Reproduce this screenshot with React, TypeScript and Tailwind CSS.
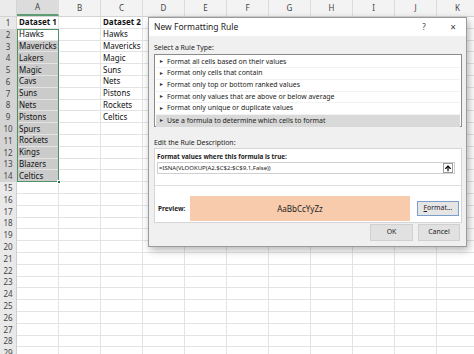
import { ArrowUp } from 'lucide-react'

const cols = ['A', 'B', 'C', 'D', 'E', 'F', 'G', 'H', 'I', 'J', 'K']

const colA = ['Dataset 1', 'Hawks', 'Mavericks', 'Lakers', 'Magic', 'Cavs', 'Suns', 'Nets', 'Pistons', 'Spurs', 'Rockets', 'Kings', 'Blazers', 'Celtics']
const colC = ['Dataset 2', 'Hawks', 'Mavericks', 'Magic', 'Suns', 'Nets', 'Pistons', 'Rockets', 'Celtics']

const ruleTypes = [
  'Format all cells based on their values',
  'Format only cells that contain',
  'Format only top or bottom ranked values',
  'Format only values that are above or below average',
  'Format only unique or duplicate values',
  'Use a formula to determine which cells to format',
]

const rows = Array.from({ length: 29 }, (_, i) => i + 1)

function Sheet() {
  return (
    <div className="flex flex-col">
      {/* column headers */}
      <div className="flex h-[17px] bg-[#f3f3f3] border-b border-[#d4d4d4]">
        <div className="w-[17px] shrink-0 bg-[#ebebeb] border-r border-[#d4d4d4]" />
        {cols.map(c => (
          <div
            key={c}
            className={`w-[42px] shrink-0 flex items-center justify-center text-[8px] text-[#444] border-r border-[#dcdcdc] ${
              c === 'A' ? 'bg-[#dcdcdc] border-b-2 border-b-[#5e9c76]' : ''
            }`}
          >
            {c}
          </div>
        ))}
      </div>
      {rows.map(r => {
        const sel = r >= 2 && r <= 14
        return (
          <div key={r} className="flex h-[11.8px]">
            <div
              className={`w-[17px] shrink-0 flex items-center justify-center text-[8px] text-[#444] border-r border-[#cfcfcf] ${
                sel ? 'bg-[#d4d4d4]' : 'bg-[#e9e9e9]'
              }`}
            >
              {r}
            </div>
            {cols.map(c => {
              let text = ''
              if (c === 'A') text = colA[r - 1] ?? ''
              if (c === 'C') text = colC[r - 1] ?? ''
              const fill = c === 'A' && r >= 3 && r <= 14
              return (
                <div
                  key={c}
                  className={`w-[42px] shrink-0 flex items-center px-[2px] text-[8px] leading-none text-[#111] whitespace-nowrap border-r border-b border-[#e3e3e3] ${
                    fill ? 'bg-[#cbcbcb]' : ''
                  } ${r === 1 ? 'font-bold' : ''}`}
                >
                  {text}
                </div>
              )
            })}
          </div>
        )
      })}
    </div>
  )
}

function Dialog() {
  return (
    <div className="absolute left-[148px] top-[17px] w-[319px] flex flex-col border border-[#9a9a9a] shadow-[2px_3px_8px_rgba(0,0,0,0.3)] bg-[#f0f0f0] text-[#222]">
      {/* title bar */}
      <div className="h-[18px] bg-white flex items-center pl-[5px] text-[8.5px]">
        <span>New Formatting Rule</span>
        <span className="ml-auto w-[10px] text-center text-[8px] text-[#444]">?</span>
        <span className="ml-[19px] mr-[8px] w-[10px] text-center text-[10px] text-[#444] leading-none">×</span>
      </div>

      <div className="flex flex-col pr-[4px] pl-[5px] pt-[7px] pb-[5px] text-[6.9px]">
        <div className="h-[10px] leading-[10px]">Select a Rule Type:</div>
        <div className="mt-[1px] h-[73px] border border-[#8a8a8a] bg-white px-[1px] pt-[1.5px] flex flex-col">
          {ruleTypes.map((t, i) => (
            <div
              key={t}
              className={`h-[11.7px] shrink-0 flex items-center pl-[3px] gap-[3px] ${
                i === 5 ? 'bg-[#d9d9d9]' : 'border-b border-[#f2f2f2]'
              }`}
            >
              <span className="text-[5px] text-[#333]">►</span>
              <span>{t}</span>
            </div>
          ))}
        </div>

        <div className="mt-[11px] h-[10px] leading-[10px]">Edit the Rule Description:</div>
        <div className="h-[75px] border border-[#d6d6d6] bg-white flex flex-col pt-[3px] pb-[3px]">
          <div className="h-[10px] leading-[10px] pl-[2px] font-bold text-[6.3px]">Format values where this formula is true:</div>
          <div className="ml-[2px] mr-[6px] h-[12px] border border-[#d0d0d0] flex items-center pl-[1px]">
            <span className="text-[6px]">=ISNA(VLOOKUP(A2,$C$2:$C$9,1,False))</span>
            <div className="ml-auto mr-[1px] w-[10px] h-[10px] border border-[#9a9a9a] bg-white flex items-center justify-center">
              <ArrowUp size={9} strokeWidth={3.5} color="#000" />
            </div>
          </div>
          <div className="mt-[11px] border-t border-[#dedede]" />
          <div className="mt-[10px] h-[25px] flex items-center pl-[3px]">
            <span className="w-[32px] font-bold text-[6.5px]">Preview:</span>
            <div className="w-[220px] h-[25px] bg-[#f8cbad] flex items-center justify-center text-[8px] text-[#222]">
              AaBbCcYyZz
            </div>
            <div className="ml-[7px] w-[42px] h-[15px] border border-[#7b9ecb] bg-[#e5e5e5] flex items-center justify-center">
              <span><span className="underline">F</span>ormat...</span>
            </div>
          </div>
        </div>

        <div className="mt-[1px] flex justify-end gap-[5px] pr-[2px]">
          <div className="w-[43px] h-[17px] bg-[#e1e1e1] border border-[#d0d0d0] flex items-center justify-center">OK</div>
          <div className="w-[42px] h-[17px] bg-[#e1e1e1] border border-[#d0d0d0] flex items-center justify-center">Cancel</div>
        </div>
      </div>
    </div>
  )
}

export default function App() {
  return (
    <div
      className="relative w-[474px] h-[354px] overflow-hidden bg-white"
      style={{ fontFamily: '"Noto Sans", "Open Sans", sans-serif' }}
    >
      <Sheet />
      {/* selection outline A2:A14 */}
      <div className="absolute left-[17px] top-[28.8px] w-[42px] h-[153.4px] border border-[#4f9169] pointer-events-none" />
      <div className="absolute left-[57px] top-[180px] w-[4px] h-[4px] bg-[#217346] border border-white" />
      <Dialog />
    </div>
  )
}
